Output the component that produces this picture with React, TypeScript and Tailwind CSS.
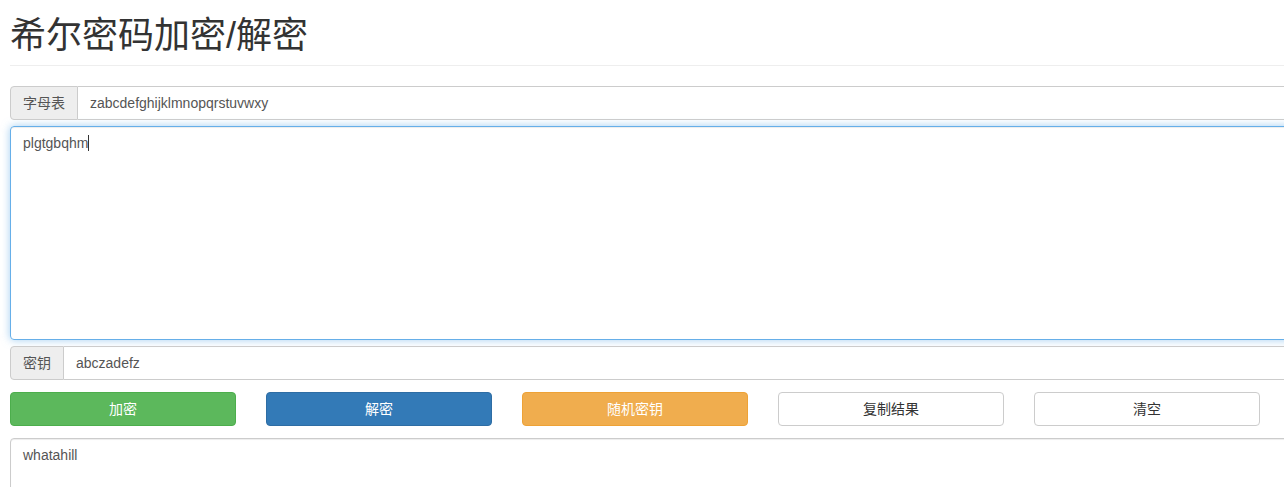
import React from "react";

const font = { fontFamily: '"Liberation Sans", "Noto Sans CJK SC", sans-serif' };

export default function App() {
  return (
    <div className="w-[1284px] overflow-hidden bg-white" style={font}>
      <div className="w-[1320px] pl-[10px] pb-4">
        <div className="border-b border-[#eeeeee] pb-[9px] mt-[16px]">
          <h1 className="text-[36px] leading-[40px] text-[#333333] font-normal">希尔密码加密/解密</h1>
        </div>

        <div className="mt-[20px] flex h-[34px] text-[14px]">
          <span className="flex items-center px-[12px] bg-[#eeeeee] border border-[#cccccc] rounded-l-[4px] text-[#555555]">字母表</span>
          <div className="flex-1 flex items-center px-[12px] border border-l-0 border-[#cccccc] text-[#555555]">zabcdefghijklmnopqrstuvwxy</div>
        </div>

        <div className="mt-[6px] h-[214px] border border-[#66afe9] rounded-[4px] px-[12px] py-[6px] text-[14px] leading-[20px] text-[#555555] shadow-[inset_0_1px_1px_rgba(0,0,0,0.075),0_0_8px_rgba(102,175,233,0.6)]">
          plgtgbqhm<span className="inline-block w-px h-[16px] bg-[#333] align-[-3px]"></span>
        </div>

        <div className="mt-[6px] flex h-[34px] text-[14px]">
          <span className="flex items-center px-[12px] bg-[#eeeeee] border border-[#cccccc] rounded-l-[4px] text-[#555555]">密钥</span>
          <div className="flex-1 flex items-center px-[12px] border border-l-0 border-[#cccccc] text-[#555555]">abczadefz</div>
        </div>

        <div className="mt-[12px] flex gap-[30px] text-[14px]">
          <button className="w-[226px] h-[34px] rounded-[4px] border border-[#4cae4c] bg-[#5cb85c] text-white">加密</button>
          <button className="w-[226px] h-[34px] rounded-[4px] border border-[#2e6da4] bg-[#337ab7] text-white">解密</button>
          <button className="w-[226px] h-[34px] rounded-[4px] border border-[#eea236] bg-[#f0ad4e] text-white">随机密钥</button>
          <button className="w-[226px] h-[34px] rounded-[4px] border border-[#cccccc] bg-white text-[#333333]">复制结果</button>
          <button className="w-[226px] h-[34px] rounded-[4px] border border-[#cccccc] bg-white text-[#333333]">清空</button>
        </div>

        <div className="mt-[12px] h-[214px] border border-[#cccccc] rounded-[4px] px-[12px] py-[6px] text-[14px] leading-[20px] text-[#555555] shadow-[inset_0_1px_1px_rgba(0,0,0,0.075)]">
          whatahill
        </div>
      </div>
    </div>
  );
}
